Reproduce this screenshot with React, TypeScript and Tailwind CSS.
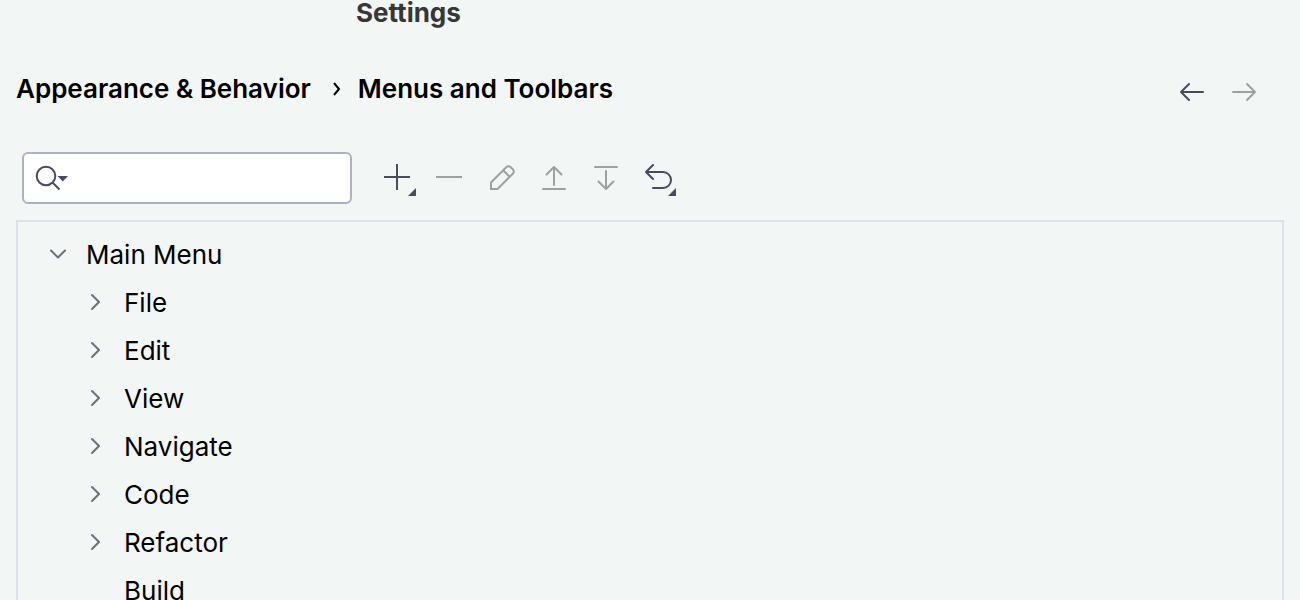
import React, { useState } from 'react';

interface IconProps {
  className?: string;
  children: React.ReactNode;
}

const Icon: React.FC<IconProps> = ({ className = '', children }) => (
  <svg
    viewBox="0 0 40 40"
    className={`w-10 h-10 ${className}`}
    fill="none"
    stroke="currentColor"
    strokeWidth="2"
    strokeLinecap="round"
    strokeLinejoin="round"
    aria-hidden="true"
  >
    {children}
  </svg>
);

// Small corner mark on buttons that open a popup
const Corner = () => <path d="M39 31v8h-8z" fill="currentColor" stroke="none" />;

const tools = [
  {
    label: 'Add',
    enabled: true,
    icon: (
      <>
        <path d="M20 7v26M7 20h26" strokeLinecap="butt" />
        <Corner />
      </>
    ),
  },
  { label: 'Remove', enabled: false, icon: <path d="M7 20h26" strokeLinecap="butt" /> },
  {
    label: 'Edit',
    enabled: false,
    icon: (
      <path
        d="M10 32v-6.5L25.5 10a2.8 2.8 0 0 1 4 0l2.5 2.5a2.8 2.8 0 0 1 0 4L16.5 32zM22.300 13.500l6.200 6.200"
        strokeLinejoin="miter"
      />
    ),
  },
  {
    label: 'Move Up',
    enabled: false,
    icon: <path d="M21 28V10M13.500 17.500L21 10l7.500 7.500M10 32h22" />,
  },
  {
    label: 'Move Down',
    enabled: false,
    icon: <path d="M10 10h22M21 14v18M13.500 24.500L21 32l7.500-7.500" />,
  },
  {
    label: 'Restore',
    enabled: true,
    icon: (
      <>
        <path d="M16 8L9 15l7 7M9 15h17a8 8 0 0 1 0 16H16" />
        <Corner />
      </>
    ),
  },
];

const menus = [
  { name: 'File', hasChildren: true },
  { name: 'Edit', hasChildren: true },
  { name: 'View', hasChildren: true },
  { name: 'Navigate', hasChildren: true },
  { name: 'Code', hasChildren: true },
  { name: 'Refactor', hasChildren: true },
  { name: 'Build', hasChildren: false },
];

const Chevron: React.FC<{ open?: boolean }> = ({ open }) => (
  <svg
    viewBox="0 0 20 20"
    className="w-5 h-5 shrink-0 text-[#6c6f80]"
    fill="none"
    stroke="currentColor"
    strokeWidth="2"
    strokeLinecap="round"
    strokeLinejoin="round"
    aria-hidden="true"
  >
    <path d={open ? 'M3 6.500l7 7 7-7' : 'M6 3l7 7-7 7'} />
  </svg>
);

export default function App() {
  const [query, setQuery] = useState('');
  const [expanded, setExpanded] = useState(true);

  return (
    <div className="flex flex-col h-screen overflow-hidden bg-[#f2f6f5] text-black text-[26px] font-['Inter',sans-serif]">
      <h1 className="pl-[356px] leading-[26px] font-bold text-[#373737]">Settings</h1>

      <header className="flex items-center justify-between mt-[46px] pl-4 pr-9">
        <nav className="flex items-center pb-1.5 leading-8 font-semibold" aria-label="Breadcrumb">
          <a href="#appearance">Appearance &amp; Behavior</a>
          <svg
            viewBox="0 0 8 16"
            className="w-2 h-4 ml-[22px] mr-[17px]"
            fill="none"
            stroke="currentColor"
            strokeWidth="2"
            aria-hidden="true"
          >
            <path d="M1 2l5 6-5 6" />
          </svg>
          <span>Menus and Toolbars</span>
        </nav>
        <div className="flex gap-3">
          <button type="button" aria-label="Back" className="text-[#494b5f]">
            <Icon>
              <path d="M31 20H9M17 12l-8 8 8 8" />
            </Icon>
          </button>
          <button type="button" aria-label="Forward" disabled className="text-[#a0a0a2]">
            <Icon>
              <path d="M9 20h22M23 12l8 8-8 8" />
            </Icon>
          </button>
        </div>
      </header>

      <div className="flex items-center mt-10 ml-[22px]">
        <label className="flex items-center w-[330px] h-[52px] border-2 border-[#afb1c3] rounded-md bg-white text-[#494b5f]">
          <svg
            viewBox="0 0 36 20"
            className="w-9 h-5 ml-2 shrink-0"
            fill="none"
            stroke="currentColor"
            strokeWidth="2"
            overflow="visible"
            aria-hidden="true"
          >
            <circle cx="14" cy="8" r="9.300" />
            <path d="M20.500 14.500l7 7" />
            <path d="M25.500 8h10.500l-5.200 5.500z" fill="currentColor" stroke="none" />
          </svg>
          <input
            type="text"
            aria-label="Search actions"
            value={query}
            onChange={(e) => setQuery(e.target.value)}
            className="flex-1 min-w-0 px-2 outline-none text-black"
          />
        </label>
        <div className="flex gap-3 ml-[25px] pb-0.5" role="toolbar" aria-label="Menu actions">
          {tools.map(({ label, enabled, icon }) => (
            <button
              key={label}
              type="button"
              aria-label={label}
              disabled={!enabled}
              className={enabled ? 'text-[#494b5f]' : 'text-[#a0a0a2]'}
            >
              <Icon>{icon}</Icon>
            </button>
          ))}
        </div>
      </div>

      <main className="flex-1 min-h-0 overflow-hidden mt-4 mx-4 pt-2 pl-[30px] border-2 border-b-0 border-[#e0e0ed]">
        <button
          type="button"
          aria-expanded={expanded}
          onClick={() => setExpanded(!expanded)}
          className="flex items-center gap-[18px] h-12"
        >
          <Chevron open={expanded} />
          <span>Main Menu</span>
        </button>
        {expanded && (
          <ul className="pl-[38px]">
            {menus.map(({ name, hasChildren }) => (
              <li key={name}>
                <button type="button" className="flex items-center gap-[18px] h-12">
                  {hasChildren ? <Chevron /> : <span className="w-5" />}
                  <span>{name}</span>
                </button>
              </li>
            ))}
          </ul>
        )}
      </main>
    </div>
  );
}
